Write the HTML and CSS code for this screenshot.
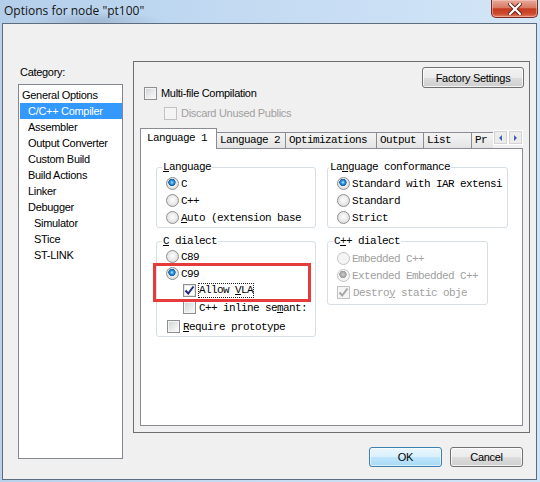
FILE: index.html
```html
<!DOCTYPE html>
<html>
<head>
<meta charset="utf-8">
<title>Options for node "pt100"</title>
<link rel="stylesheet" href="styles.css">
</head>
<body>
<div class="window">
  <div class="titlebar">
    <span class="title">Options for node "pt100"</span>
    <div class="close">
      <svg width="14" height="12" viewBox="0 0 14 12">
        <path d="M2 1 L12 11 M12 1 L2 11" stroke="#5a1e16" stroke-width="4" stroke-linecap="square"/>
        <path d="M2 1 L12 11 M12 1 L2 11" stroke="#ffffff" stroke-width="2.2" stroke-linecap="square"/>
      </svg>
    </div>
  </div>
  <div class="client">
    <div class="leftcol">
      <div class="cat-label">Category:</div>
      <ul class="catlist">
        <li class="l0">General Options</li>
        <li class="l1 sel">C/C++ Compiler</li>
        <li class="l1">Assembler</li>
        <li class="l1">Output Converter</li>
        <li class="l1">Custom Build</li>
        <li class="l1">Build Actions</li>
        <li class="l1">Linker</li>
        <li class="l1">Debugger</li>
        <li class="l2">Simulator</li>
        <li class="l2">STice</li>
        <li class="l2">ST-LINK</li>
      </ul>
    </div>
    <div class="rightcol">
      <div class="outer-group">
        <div class="topbar"><div class="btn factory">Factory Settings</div></div>
        <div class="opts">
          <div class="chkrow"><span class="cb"></span><span>Multi-file Compilation</span></div>
          <div class="chkrow sub disabled"><span class="cb dis"></span><span>Discard Unused Publics</span></div>
        </div>
        <div class="tabs mono">
          <div class="tab active">Language 1</div>
          <div class="tab w69">Language 2</div>
          <div class="tab w91">Optimizations</div>
          <div class="tab w47">Output</div>
          <div class="tab w48">List</div>
          <div class="tab w21 clip">Pr</div>
          <div class="tabscroll">
            <div class="arr"><span class="tri-l"></span></div>
            <div class="arr"><span class="tri-r"></span></div>
          </div>
        </div>
        <div class="panel mono">
          <div class="grid">
            <div class="grp g-lang">
              <span class="legend"><u>L</u>anguage</span>
              <div class="opt"><span class="rb on"></span><span>C</span></div>
              <div class="opt"><span class="rb"></span><span>C++</span></div>
              <div class="opt"><span class="rb"></span><span><u>A</u>uto (extension base</span></div>
            </div>
            <div class="grp g-conf">
              <span class="legend near">La<u>n</u>guage conformance</span>
              <div class="opt"><span class="rb on"></span><span>Standard with IAR extensi</span></div>
              <div class="opt"><span class="rb"></span><span>Standard</span></div>
              <div class="opt"><span class="rb"></span><span>Strict</span></div>
            </div>
            <div class="grp g-cdial">
              <span class="legend"><u>C</u> dialect</span>
              <div class="opt"><span class="rb"></span><span>C89</span></div>
              <div class="opt"><span class="rb on"></span><span>C99</span></div>
              <div class="opt ind"><span class="cb on"><svg width="11" height="11" viewBox="0 0 11 11"><path d="M1.5 5.5 L4.2 8.5 L9.5 1.5" fill="none" stroke="#1d2a78" stroke-width="2"/></svg></span><span class="focus">Allow <u>V</u>LA</span></div>
              <div class="opt ind"><span class="cb"></span><span>C++ inline se<u>m</u>ant:</span></div>
              <div class="opt req"><span class="cb"></span><span><u>R</u>equire prototype</span></div>
              <div class="redbox"></div>
            </div>
            <div class="grp g-cpp">
              <span class="legend">C<u>+</u>+ dialect</span>
              <div class="opt disabled"><span class="rb dis"></span><span>Embedded C++</span></div>
              <div class="opt disabled"><span class="rb dis ondis"></span><span>Extended Embedded C++</span></div>
              <div class="opt disabled"><span class="cb dis"><svg width="11" height="11" viewBox="0 0 11 11"><path d="M1.5 5.5 L4.2 8.5 L9.5 1.5" fill="none" stroke="#a6a6a6" stroke-width="2"/></svg></span><span>Destro<u>y</u> static obje</span></div>
            </div>
          </div>
        </div>
      </div>
      <div class="buttons">
        <div class="btn ok">OK</div>
        <div class="btn">Cancel</div>
      </div>
    </div>
  </div>
</div>
</body>
</html>
```

FILE: styles.css
```css
* { box-sizing: border-box; }
html, body { margin: 0; padding: 0; }
body {
  width: 540px;
  height: 482px;
  overflow: hidden;
  font-family: "Liberation Sans", Arial, sans-serif;
  font-size: 11px;
  color: #000;
}
.window {
  width: 540px;
  height: 482px;
  display: flex;
  flex-direction: column;
  background: linear-gradient(to right, #b9d2ec, #c6dcf2 50%, #d0e4f7 100%);
}
.titlebar {
  height: 23px;
  flex: none;
  display: flex;
  align-items: flex-start;
  background:
    radial-gradient(ellipse 70px 9px at 95px 21px, rgba(110,130,160,0.35), rgba(110,130,160,0)),
    linear-gradient(to right, #b4cde9 0%, #bed7f0 30%, #c9def4 65%, #d4e7f8 100%);
}
.title {
  margin: 3px 0 0 4px;
  font-family: "Open Sans", "Liberation Sans", sans-serif;
  font-size: 12px;
  line-height: 15px;
  color: #141414;
}
.close {
  margin-left: auto;
  margin-right: 2px;
  width: 47px;
  height: 18px;
  border: 1px solid #7a2a20;
  border-top: none;
  border-radius: 0 0 5px 5px;
  background: linear-gradient(#e7aa9c 0%, #d97a63 45%, #c43b20 52%, #cc4a2e 80%, #e07e60 100%);
  box-shadow: inset 0 0 0 1px rgba(255,220,210,0.45);
  display: flex;
  align-items: center;
  justify-content: center;
}
.client {
  flex: 1;
  margin: 0 3px 2px 2px;
  border: 1px solid #5d6d7e;
  background: #f0f0f0;
  display: flex;
  padding: 37px 6px 0 15px;
}
.leftcol { width: 105px; margin-right: 10px; flex: none; }
.cat-label {
  margin-top: 4px;
  height: 14px;
  line-height: 14px;
  padding-left: 2px;
  letter-spacing: -0.3px;
}
.catlist {
  margin: 5px 0 0;
  padding: 2px 0 0;
  list-style: none;
  height: 375px;
  border: 1px solid #828790;
  background: #fff;
  letter-spacing: -0.3px;
}
.catlist li {
  height: 16px;
  line-height: 16px;
  margin-left: 1px;
  white-space: nowrap;
}
.catlist .l0 { padding-left: 2px; }
.catlist .l1 { padding-left: 8px; }
.catlist .l2 { padding-left: 14px; }
.catlist .sel { background: #3399ff; color: #fff; }

.rightcol { width: 397px; flex: none; display: flex; flex-direction: column; }
.outer-group {
  height: 372px;
  border: 1px solid #6e6e6e;
  padding: 5px 6px 6px 6px;
  display: flex;
  flex-direction: column;
}
.topbar { display: flex; justify-content: flex-end; height: 21px; margin-right: -1px; }
.btn {
  display: flex;
  align-items: center;
  justify-content: center;
  border: 1px solid #707070;
  border-radius: 3px;
  background: linear-gradient(#f2f2f2 0%, #ebebeb 50%, #dddddd 51%, #cfcfcf 100%);
  box-shadow: inset 0 0 0 1px rgba(255,255,255,0.75);
  letter-spacing: -0.3px;
  color: #000;
}
.factory { width: 102px; height: 21px; }
.opts { margin-top: -5px; padding-left: 4px; letter-spacing: -0.3px; }
.chkrow { height: 20px; display: flex; align-items: center; }
.chkrow .cb { margin-right: 4px; }
.chkrow.sub { padding-left: 20px; }
.disabled { color: #a0a0a0; }

.cb {
  width: 13px;
  height: 13px;
  flex: none;
  border: 1px solid #8e8f8f;
  background: linear-gradient(135deg, #cdd0d4 0%, #eceded 60%, #fafafa 100%);
  box-shadow: inset 0 0 0 1px #f4f4f4;
  display: flex;
  align-items: center;
  justify-content: center;
}
.cb.on { background: #fff; box-shadow: inset 0 0 0 1px #e8e8e8; }
.cb.dis { border-color: #c2c2c2; background: #f4f4f4; box-shadow: none; }
.rb {
  width: 13px;
  height: 13px;
  flex: none;
  border-radius: 50%;
  border: 1px solid #8f8f8f;
  background: radial-gradient(circle at 50% 45%, #fdfdfd 0, #ececec 45%, #d2d2d2 100%);
}
.rb.on {
  background:
    radial-gradient(circle at 45% 40%, #b5ecff 0, #3a9be3 1.6px, #0d5fa8 3.4px, rgba(13,95,168,0) 3.9px),
    radial-gradient(circle at 50% 45%, #fdfdfd 0, #ececec 45%, #d2d2d2 100%);
}
.rb.dis { border-color: #c4c4c4; background: #f4f4f4; }
.rb.ondis {
  background:
    radial-gradient(circle at 45% 40%, #d0d0d0 0, #9a9a9a 3.4px, rgba(150,150,150,0) 3.9px),
    #f4f4f4;
}

.mono {
  font-family: "Liberation Mono", "Courier New", monospace;
  font-size: 11px;
  letter-spacing: -0.6px;
}
.tabs { margin-top: 5px; height: 20px; display: flex; align-items: flex-end; flex: none; }
.tab {
  flex: none;
  height: 16px;
  line-height: 15px;
  border: 1px solid #898c95;
  border-left: none;
  border-bottom: none;
  padding-left: 3px;
  background: linear-gradient(#f4f4f4, #e4e4e4);
  white-space: nowrap;
  overflow: hidden;
}
.tab.active {
  width: 77px;
  height: 21px;
  line-height: 19px;
  margin-bottom: -1px;
  border-left: 1px solid #898c95;
  padding-left: 6px;
  background: #fff;
  position: relative;
  z-index: 1;
}
.w69 { width: 69px; }
.w91 { width: 91px; }
.w47 { width: 47px; }
.w48 { width: 48px; }
.w21 { width: 21px; }
.tab.clip { border-right: none; }
.tabscroll { display: flex; align-self: flex-start; margin-top: 2px; flex: none; width: 30px; }
.arr {
  width: 15px;
  height: 15px;
  border: 1px solid #fdfdfd;
  outline: 1px solid #d4d4d4;
  outline-offset: -2px;
  background: #ececec;
  display: flex;
  align-items: center;
  justify-content: center;
}
.tri-l { width: 0; height: 0; border-top: 3px solid transparent; border-bottom: 3px solid transparent; border-right: 3px solid #3d5fae; }
.tri-r { width: 0; height: 0; border-top: 3px solid transparent; border-bottom: 3px solid transparent; border-left: 3px solid #3d5fae; }

.panel {
  flex: 1;
  border: 1px solid #898c95;
  background: #fff;
  padding: 18px 0 0 15px;
}
.grid {
  display: grid;
  grid-template-columns: 160px 181px;
  column-gap: 11px;
  row-gap: 13px;
  align-items: start;
  justify-items: start;
}
.grp {
  position: relative;
  border: 1px solid #d5dfe5;
  border-radius: 3px;
  padding: 7px 0 0 9px;
  overflow: visible;
}
.g-lang { width: 160px; height: 61px; }
.g-conf { width: 181px; height: 61px; }
.g-cdial { width: 160px; height: 96px; padding-top: 6px; }
.g-cpp { width: 161px; height: 64px; padding-top: 8px; }
.legend {
  position: absolute;
  top: -8px;
  left: 5px;
  height: 14px;
  line-height: 14px;
  padding: 0 1px;
  background: #fff;
  white-space: nowrap;
}
.legend.near { left: 1px; }
.opt {
  height: 17px;
  display: flex;
  align-items: center;
  white-space: nowrap;
  overflow: hidden;
}
.opt .rb { margin-right: 2px; }
.opt .cb { margin-right: 3px; }
.opt.ind { padding-left: 17px; }
.opt.req { padding-left: 1px; margin-top: 2px; }
.focus { outline: 1px dotted #222; outline-offset: 0; line-height: 13px; }
u { text-decoration: underline; text-underline-offset: 1px; }
.redbox {
  position: absolute;
  left: -4px;
  top: 21px;
  width: 158px;
  height: 39px;
  border: 3px solid #e63b3b;
}

.buttons {
  display: flex;
  justify-content: flex-end;
  gap: 8px;
  margin-top: 14px;
  padding-right: 7px;
}
.buttons .btn { width: 73px; height: 20px; }
.btn.ok {
  border-color: #3c7fb1;
  background: linear-gradient(#eaf6fd 0%, #d9f0fc 50%, #bee6fd 51%, #a7d9f5 100%);
  box-shadow: inset 0 0 0 1px rgba(255,255,255,0.6);
}
```
